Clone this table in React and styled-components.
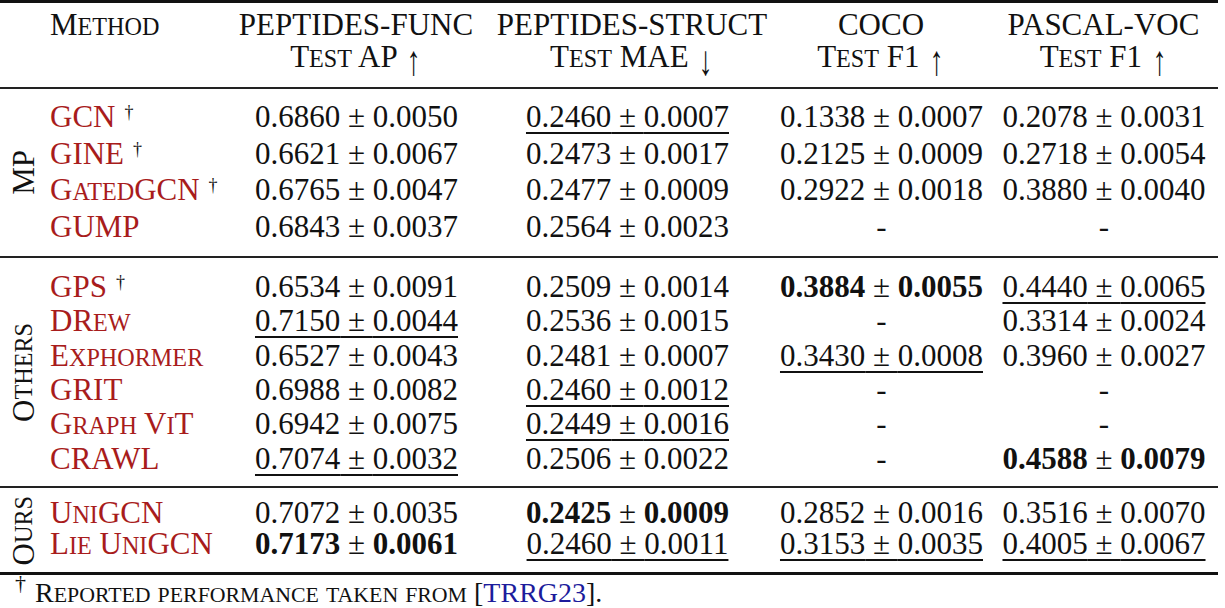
import React from "react";
import styled, { createGlobalStyle } from "styled-components";

const GlobalStyle = createGlobalStyle`
  html, body { margin: 0; padding: 0; background: #fff; }
  body {
    font-family: "Liberation Serif", "Times New Roman", serif;
    color: #111;
  }
`;

const Table = styled.table`
  width: 1218px;
  table-layout: fixed;
  border-collapse: collapse;
  font-size: 31px;
  border-top: 3px solid #111;
`;

const Head = styled.thead`
  border-bottom: 2px solid #222;
`;

const Group = styled.tbody`
  border-bottom: ${(p) => (p.$last ? "3px solid #111" : "2px solid #222")};
`;

const HeadCell = styled.th`
  font-weight: normal;
  line-height: 32px;
  vertical-align: top;
  white-space: nowrap;
  padding: 6px 0 14px ${(p) => (p.$left ? "5px" : "0")};
  text-align: ${(p) => (p.$left ? "left" : "center")};
`;

const Arrow = styled.span`
  display: inline-block;
  line-height: 1;
  color: #111;
  transform: scale(0.9, 1.35) translateY(3px);
  margin-left: 2px;
`;

const Row = styled.tr`
  & > td {
    line-height: ${(p) => p.$h}px;
    padding-top: ${(p) => p.$pt || 0}px;
    padding-bottom: ${(p) => p.$pb || 0}px;
  }
`;

const GroupCell = styled.td`
  && { padding: 0 0 0 2px; }
  vertical-align: middle;
`;

const GroupLabel = styled.div`
  writing-mode: vertical-rl;
  transform: rotate(180deg);
  line-height: 1;
  margin: 0 auto;
`;

const MethodCell = styled.td`
  padding-left: 5px;
  white-space: nowrap;
  text-align: left;
`;

const MethodName = styled.span`
  color: #a81c1c;
`;

const Dagger = styled.span`
  font-size: 18px;
  vertical-align: 9px;
  margin-left: 9px;
  line-height: 0;
`;

const Cell = styled.td`
  text-align: center;
  white-space: nowrap;
  padding-right: ${(p) => p.$shift || 0}px;
`;

const Val = styled.span`
  text-decoration: ${(p) => (p.$u ? "underline" : "none")};
  text-decoration-thickness: 1.5px;
  text-underline-offset: 5px;
  text-decoration-skip-ink: none;
`;

const Small = styled.span`
  font-size: 0.78em;
  line-height: 1;
`;

const Note = styled.div`
  font-size: 28px;
  line-height: 30px;
  padding: 3px 0 0 15px;
  white-space: nowrap;
`;

const NoteDagger = styled.span`
  font-size: 22px;
  vertical-align: 12px;
  line-height: 0;
  margin-right: 9px;
`;

const Cite = styled.span`
  color: #1c1c9c;
`;

// small caps the way LaTeX sets them: lowercase letters become smaller capitals
const Sc = ({ children }) =>
  children
    .split(/([a-z]+)/)
    .map((part, i) =>
      /[a-z]/.test(part) ? <Small key={i}>{part.toUpperCase()}</Small> : part
    );

const columns = [45, 176, 270, 282, 216, 229];
const shifts = [0, 10, 0, 0];

const groups = [
  {
    label: "MP",
    h: 36.7,
    pt: 10,
    pb: 10,
    rows: [
      ["GCN", true, ["0.6860", "0.0050"], ["0.2460", "0.0007", "u"], ["0.1338", "0.0007"], ["0.2078", "0.0031"]],
      ["GINE", true, ["0.6621", "0.0067"], ["0.2473", "0.0017"], ["0.2125", "0.0009"], ["0.2718", "0.0054"]],
      ["GatedGCN", true, ["0.6765", "0.0047"], ["0.2477", "0.0009"], ["0.2922", "0.0018"], ["0.3880", "0.0040"]],
      ["GUMP", false, ["0.6843", "0.0037"], ["0.2564", "0.0023"], null, null],
    ],
  },
  {
    label: "Others",
    h: 34.4,
    pt: 12,
    pb: 10,
    rows: [
      ["GPS", true, ["0.6534", "0.0091"], ["0.2509", "0.0014"], ["0.3884", "0.0055", "b"], ["0.4440", "0.0065", "u"]],
      ["DRew", false, ["0.7150", "0.0044", "u"], ["0.2536", "0.0015"], null, ["0.3314", "0.0024"]],
      ["Exphormer", false, ["0.6527", "0.0043"], ["0.2481", "0.0007"], ["0.3430", "0.0008", "u"], ["0.3960", "0.0027"]],
      ["GRIT", false, ["0.6988", "0.0082"], ["0.2460", "0.0012", "u"], null, null],
      ["Graph ViT", false, ["0.6942", "0.0075"], ["0.2449", "0.0016", "u"], null, null],
      ["CRAWL", false, ["0.7074", "0.0032", "u"], ["0.2506", "0.0022"], null, ["0.4588", "0.0079", "b"]],
    ],
  },
  {
    label: "Ours",
    h: 31,
    pt: 9,
    pb: 13,
    last: true,
    rows: [
      ["UniGCN", false, ["0.7072", "0.0035"], ["0.2425", "0.0009", "b"], ["0.2852", "0.0016"], ["0.3516", "0.0070"]],
      ["Lie UniGCN", false, ["0.7173", "0.0061", "b"], ["0.2460", "0.0011", "u"], ["0.3153", "0.0035", "u"], ["0.4005", "0.0067", "u"]],
    ],
  },
];

const Value = ({ data, shift }) => {
  if (!data) return <Cell $shift={shift}>-</Cell>;
  const [v, e, mark] = data;
  const bold = mark === "b";
  return (
    <Cell $shift={shift}>
      <Val $u={mark === "u"}>
        {bold ? <b>{v}</b> : v} ± {bold ? <b>{e}</b> : e}
      </Val>
    </Cell>
  );
};

export default function App() {
  return (
    <>
      <GlobalStyle />
      <Table>
        <colgroup>
          {columns.map((w, i) => (
            <col key={i} style={{ width: w }} />
          ))}
        </colgroup>
        <Head>
          <tr>
            <HeadCell />
            <HeadCell $left>
              <Sc>Method</Sc>
            </HeadCell>
            <HeadCell>
              PEPTIDES-FUNC
              <br />
              <Sc>Test</Sc> AP <Arrow>↑</Arrow>
            </HeadCell>
            <HeadCell>
              PEPTIDES-STRUCT
              <br />
              <Sc>Test</Sc> MAE <Arrow>↓</Arrow>
            </HeadCell>
            <HeadCell>
              COCO
              <br />
              <Sc>Test</Sc> F1 <Arrow>↑</Arrow>
            </HeadCell>
            <HeadCell>
              PASCAL-VOC
              <br />
              <Sc>Test</Sc> F1 <Arrow>↑</Arrow>
            </HeadCell>
          </tr>
        </Head>
        {groups.map((g) => (
          <Group key={g.label} $last={g.last}>
            {g.rows.map((r, i) => {
              const [name, dag, ...vals] = r;
              return (
                <Row
                  key={name}
                  $h={g.h}
                  $pt={i === 0 ? g.pt : 0}
                  $pb={i === g.rows.length - 1 ? g.pb : 0}
                >
                  {i === 0 && (
                    <GroupCell rowSpan={g.rows.length}>
                      <GroupLabel>
                        <Sc>{g.label}</Sc>
                      </GroupLabel>
                    </GroupCell>
                  )}
                  <MethodCell>
                    <MethodName>
                      <Sc>{name}</Sc>
                    </MethodName>
                    {dag && <Dagger>†</Dagger>}
                  </MethodCell>
                  {vals.map((v, j) => (
                    <Value key={j} data={v} shift={shifts[j]} />
                  ))}
                </Row>
              );
            })}
          </Group>
        ))}
      </Table>
      <Note>
        <NoteDagger>†</NoteDagger>
        <Sc>Reported performance taken from</Sc> [<Cite>TRRG23</Cite>].
      </Note>
    </>
  );
}
